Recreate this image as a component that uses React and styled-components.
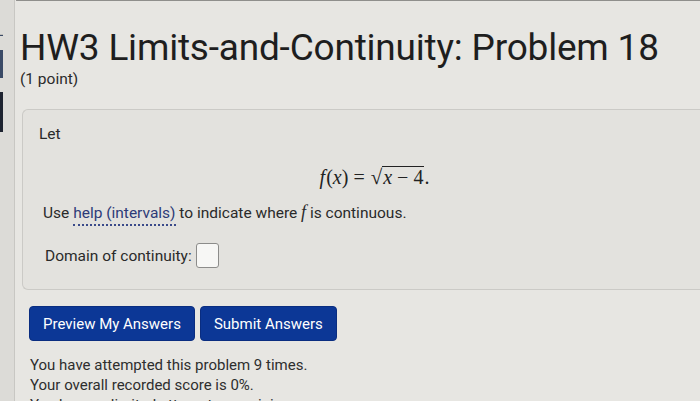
import React from 'react';
import styled, { createGlobalStyle } from 'styled-components';

const GlobalStyle = createGlobalStyle`
    html, body {
        margin: 0;
        padding: 0;
        background: #e7e6e2;
        overflow: hidden;
    }
    body {
        font-family: Roboto, "Liberation Sans", Arial, sans-serif;
        color: #2a2a2a;
    }
`;

const Page = styled.div`
    display: flex;
    width: 700px;
    height: 401px;
    overflow: hidden;
`;

const Sidebar = styled.div`
    width: 14px;
    flex-shrink: 0;
    background: #dcdbd7;
    border-right: 1px solid #c8c7c3;
    display: flex;
    flex-direction: column;
    padding-top: 34px;
    gap: 14px;
`;

const SideTab = styled.div`
    width: 3px;
    height: ${({ h }) => h}px;
    background: ${({ dark }) => (dark ? '#1d2330' : '#3a4a66')};
    border-top: ${({ line }) => (line ? '1px solid #bdbcb8' : 'none')};
`;

const Main = styled.div`
    flex: 1;
    display: flex;
    flex-direction: column;
    min-width: 0;
`;

const TopBar = styled.div`
    height: 8px;
    margin-left: 1px;
    background: #efeeea;
    border: 1px solid #8f8f8c;
    border-top: none;
    border-right: none;
    border-bottom-left-radius: 6px;
`;

const Content = styled.div`
    padding: 25px 0 0 5px;
    display: flex;
    flex-direction: column;
`;

const Title = styled.h1`
    margin: 0;
    font-family: Roboto, "Liberation Sans", Arial, sans-serif;
    font-weight: 400;
    font-size: 37px;
    line-height: 44px;
    color: #1e1e1e;
    letter-spacing: -0.2px;
`;

const Points = styled.div`
    font-size: 15.5px;
    margin-top: 0;
    color: #2b2b2b;
`;

const ProblemBox = styled.div`
    margin: 21px -10px 0 2px;
    height: 181px;
    background: #e3e2de;
    border: 1px solid #cbcac6;
    border-right: none;
    border-radius: 6px 0 0 6px;
    padding: 15px 0 0 16px;
    box-sizing: border-box;
    display: flex;
    flex-direction: column;
    font-size: 15.5px;
`;

const Para = styled.div`
    color: #2a2a2a;
`;

const Formula = styled.div`
    align-self: center;
    margin: 22px 0 0 0;
    font-family: "Liberation Serif", "DejaVu Serif", serif;
    font-size: 20px;
    color: #222;
    display: flex;
    align-items: baseline;
`;

const MathVar = styled.span`
    font-style: italic;
    padding-right: ${({ pr }) => pr || 0}px;
`;

const Radical = styled.span`
    display: inline-flex;
    align-items: baseline;
    margin-left: 6px;
`;

const RootSign = styled.span`
    font-size: 21px;
`;

const Radicand = styled.span`
    border-top: 1px solid #222;
    padding: 0 1px;
    line-height: 20px;
`;

const UsePara = styled(Para)`
    margin-top: 12px;
    margin-left: 4px;
`;

const HelpLink = styled.span`
    color: #2d3b78;
    border-bottom: 2px dotted #3a4a8a;
    padding-bottom: 2px;
`;

const InlineF = styled.span`
    font-family: "Liberation Serif", serif;
    font-style: italic;
    font-size: 18px;
`;

const AnswerRow = styled.div`
    margin: 20px 0 0 6px;
    display: flex;
    align-items: center;
    gap: 4px;
`;

const AnswerInput = styled.div`
    width: 21px;
    height: 23px;
    background: #f7f7f5;
    border: 1px solid #8c8c8a;
    border-radius: 3px;
`;

const Buttons = styled.div`
    display: flex;
    gap: 5px;
    margin: 16px 0 0 9px;
`;

const Button = styled.button`
    font-family: Roboto, "Liberation Sans", Arial, sans-serif;
    font-size: 15px;
    color: #fff;
    background: #0c3796;
    border: 1px solid #0a2d80;
    border-radius: 4px;
    height: 35px;
    padding: 0 ${({ pad }) => pad}px;
    cursor: pointer;
`;

const Status = styled.div`
    margin: 14px 0 0 10px;
    font-size: 15px;
    line-height: 20px;
    color: #2e2e2e;
`;

export default function App() {
    return (
        <>
            <GlobalStyle />
            <Page>
                <Sidebar>
                    <SideTab h={1} line />
                    <SideTab h={28} />
                    <SideTab h={40} dark />
                </Sidebar>
                <Main>
                    <TopBar />
                    <Content>
                        <Title>HW3 Limits-and-Continuity: Problem 18</Title>
                        <Points>(1 point)</Points>
                        <ProblemBox>
                            <Para>Let</Para>
                            <Formula>
                                <MathVar pr={1}>f</MathVar>(<MathVar>x</MathVar>)&nbsp;=
                                <Radical>
                                    <RootSign>√</RootSign>
                                    <Radicand>
                                        <MathVar>x</MathVar> − 4
                                    </Radicand>
                                </Radical>
                                .
                            </Formula>
                            <UsePara>
                                Use <HelpLink>help (intervals)</HelpLink> to indicate where <InlineF>f</InlineF> is
                                continuous.
                            </UsePara>
                            <AnswerRow>
                                Domain of continuity:
                                <AnswerInput />
                            </AnswerRow>
                        </ProblemBox>
                        <Buttons>
                            <Button pad={13}>Preview My Answers</Button>
                            <Button pad={13}>Submit Answers</Button>
                        </Buttons>
                        <Status>
                            You have attempted this problem 9 times.
                            <br />
                            Your overall recorded score is 0%.
                            <br />
                            You have unlimited attempts remaining.
                        </Status>
                    </Content>
                </Main>
            </Page>
        </>
    );
}
